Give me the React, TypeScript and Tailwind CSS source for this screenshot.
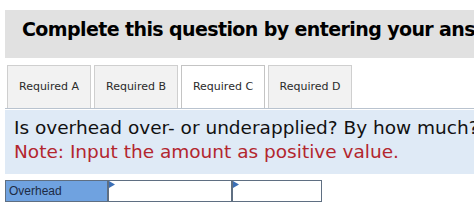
import React from 'react';

const tabs = ['Required A', 'Required B', 'Required C', 'Required D'];

function Flag() {
  return (
    <svg className="absolute left-0 top-0" width="6" height="7" viewBox="0 0 6 7">
      <path d="M0 0 L6 3.5 L0 7 Z" fill="#3b6fb6" />
    </svg>
  );
}

export default function App() {
  const active = 'Required C';
  return (
    <div className="w-[474px] h-[219px] overflow-hidden bg-white pt-[10px] pl-[5px] font-['DejaVu_Sans',Verdana,sans-serif]">
      {/* heading */}
      <div className="h-[48px] w-[520px] bg-[#e1e1e1] pl-[17px] pt-[7px]">
        <h1 className="whitespace-nowrap text-[19px] font-bold leading-[24px] tracking-[-0.6px] text-black">
          Complete this question by entering your answers in the tabs below.
        </h1>
      </div>

      {/* tabs */}
      <div className="mt-[7px] flex gap-[3px] border-b border-[#b9c3cf] pl-[2px]">
        {tabs.map((t) => (
          <div
            key={t}
            className={`flex h-[43px] w-[84px] items-center justify-center border border-b-0 text-[11px] text-[#2a2a2a] ${
              t === active ? 'border-[#c4c4c4] bg-white' : 'border-[#cfcfcf] bg-[#f2f2f2]'
            }`}
          >
            {t}
          </div>
        ))}
      </div>

      {/* question */}
      <div className="mt-[1px] h-[64px] w-[520px] bg-[#dfeaf6] pl-[9px] pt-[6px]">
        <p className="whitespace-nowrap text-[18.5px] leading-[24px] text-[#111]">
          Is overhead over- or underapplied? By how much?
        </p>
        <p className="whitespace-nowrap text-[18.5px] leading-[24px] text-[#b3262e]">
          Note: Input the amount as positive value.
        </p>
      </div>

      {/* answer row */}
      <div className="mt-[6px] flex h-[22px] w-[317px] border border-[#5f6f82] font-['Liberation_Sans',Arial,sans-serif]">
        <div className="flex w-[101px] items-center bg-[#6fa2e0] pl-[3px] text-[12px] text-[#1d2b44]">
          Overhead
        </div>
        <div className="relative w-[124px] border-l-2 border-[#5f6f82] bg-white">
          <Flag />
        </div>
        <div className="relative flex-1 border-l-2 border-[#5f6f82] bg-white">
          <Flag />
        </div>
      </div>
    </div>
  );
}
